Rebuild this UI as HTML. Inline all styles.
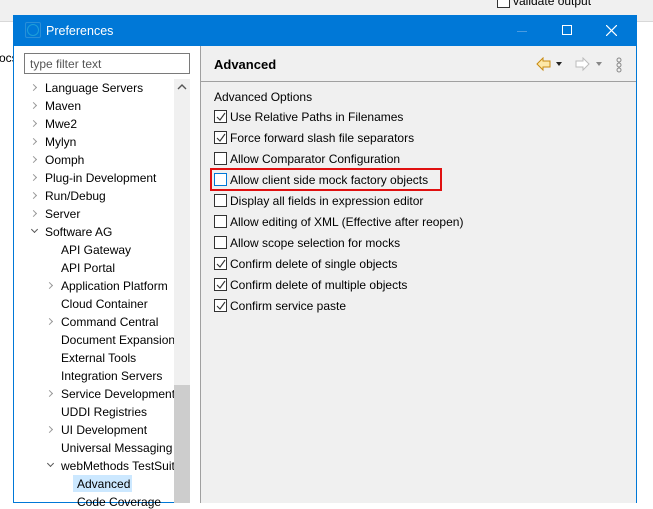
<!DOCTYPE html>
<html><head><style>
*{margin:0;padding:0;box-sizing:border-box}
body{width:653px;height:503px;overflow:hidden;background:#fff;position:relative;font-family:"Liberation Sans",sans-serif;font-size:12px;color:#000}
.a{position:absolute}
.t{position:absolute;white-space:nowrap;line-height:14px}
.cb{position:absolute;width:13px;height:13px;border:1px solid #333;background:#fff}
.cb svg{position:absolute;left:1px;top:1px}
.arr{position:absolute;width:5px;height:5px;border-right:1.3px solid #999;border-bottom:1.3px solid #999;transform:rotate(-45deg)}
.dn{transform:rotate(45deg);border-color:#555}
</style></head><body>
<div class="a" style="left:0;top:0;width:653px;height:22px;background:#f0f0f0;border-bottom:1px solid #d8d8d8"></div>
<div class="cb" style="left:497px;top:-5px;border-color:#333"></div>
<div class="t" style="left:513px;top:-6px">validate output</div>
<div class="t" style="left:-1px;top:51px">ocs</div>
<div class="a" style="left:13px;top:15px;width:624px;height:488px;background:#fff;border:1px solid #0078d7;border-top:none"></div>
<div class="a" style="left:13px;top:15px;width:624px;height:31px;background:#0078d7"></div>
<div class="a" style="left:25px;top:22px;width:16px;height:16px;border:1px solid #2a8fd8;border-radius:2px"></div>
<div class="a" style="left:27px;top:24px;width:12px;height:12px;border:1px solid #1e9fd9;border-radius:50%"></div>
<div class="t" style="left:46px;top:24px;color:#fff;font-size:12.5px">Preferences</div>
<div class="a" style="left:517px;top:31px;width:10px;height:1px;background:#4a9be0"></div>
<div class="a" style="left:562px;top:25px;width:10px;height:10px;border:1px solid #fff"></div>
<svg class="a" style="left:606px;top:25px" width="11" height="11"><path d="M0 0L11 11M11 0L0 11" stroke="#fff" stroke-width="1.2"/></svg>
<div class="a" style="left:24px;top:53px;width:166px;height:21px;border:1px solid #7a7a7a;background:#fff"></div>
<div class="t" style="left:30px;top:57px;color:#555">type filter text</div>
<div class="a" style="left:73px;top:475px;width:59px;height:17px;background:#cce8ff"></div>
<div id="tree"></div>
<div class="a" style="left:174px;top:79px;width:16px;height:424px;background:#f0f0f0"></div>
<div class="a" style="left:174px;top:385px;width:16px;height:118px;background:#cdcdcd"></div>
<svg class="a" style="left:177px;top:84px" width="10" height="6"><path d="M1 5L5 1L9 5" stroke="#555" stroke-width="1.4" fill="none"/></svg>
<div class="a" style="left:190px;top:79px;width:10px;height:424px;background:#fff"></div>
<div class="a" style="left:200px;top:46px;width:1px;height:457px;background:#a0a0a0"></div>
<div class="a" style="left:201px;top:46px;width:435px;height:457px;background:#f0f0f0"></div>
<div class="a" style="left:201px;top:81px;width:435px;height:1px;background:#a0a0a0"></div>
<div class="t" style="left:214px;top:58px;font-weight:bold;font-size:13px">Advanced</div>
<svg class="a" style="left:536px;top:57px" width="90" height="16">
<path d="M1 7L7 1V4H14V10H7V13Z" fill="#fde8a8" stroke="#c88a10" stroke-width="1"/>
<path d="M20 5H26L23 9Z" fill="#222"/>
<path d="M53 7L47 1V4H40V10H47V13Z" fill="#fff" stroke="#bbb" stroke-width="1"/>
<path d="M60 5H66L63 9Z" fill="#888"/>
<circle cx="83" cy="3" r="2" fill="none" stroke="#888"/><circle cx="83" cy="8" r="2" fill="none" stroke="#888"/><circle cx="83" cy="13" r="2" fill="none" stroke="#888"/>
</svg>
<div class="t" style="left:214px;top:90px">Advanced Options</div>
<div id="opts"></div>
<div class="a" style="left:210px;top:168px;width:232px;height:23px;border:2px solid #e01010"></div>
<script>
var tr=[[1,1,"Language Servers"],[1,1,"Maven"],[1,1,"Mwe2"],[1,1,"Mylyn"],[1,1,"Oomph"],[1,1,"Plug-in Development"],[1,1,"Run/Debug"],[1,1,"Server"],[1,2,"Software AG"],[2,0,"API Gateway"],[2,0,"API Portal"],[2,1,"Application Platform"],[2,0,"Cloud Container"],[2,1,"Command Central"],[2,0,"Document Expansion"],[2,0,"External Tools"],[2,0,"Integration Servers"],[2,1,"Service Development"],[2,0,"UDDI Registries"],[2,1,"UI Development"],[2,0,"Universal Messaging"],[2,2,"webMethods TestSuit"],[3,0,"Advanced"],[3,0,"Code Coverage"]];
var h="";tr.forEach(function(r,i){var y=88+i*18;var x=r[0]==1?45:r[0]==2?61:77;
if(r[1]==1)h+='<div class="arr" style="left:'+(x-14)+'px;top:'+(y-3)+'px"></div>';
if(r[1]==2)h+='<div class="arr dn" style="left:'+(x-13)+'px;top:'+(y-5)+'px"></div>';
h+='<div class="t" style="left:'+x+'px;top:'+(y-7)+'px">'+r[2]+'</div>';});
document.getElementById("tree").innerHTML=h;
var o=[[1,"Use Relative Paths in Filenames"],[1,"Force forward slash file separators"],[0,"Allow Comparator Configuration"],[0,"Allow client side mock factory objects"],[0,"Display all fields in expression editor"],[0,"Allow editing of XML (Effective after reopen)"],[0,"Allow scope selection for mocks"],[1,"Confirm delete of single objects"],[1,"Confirm delete of multiple objects"],[1,"Confirm service paste"]];
h="";o.forEach(function(r,i){var y=116+i*21;
h+='<div class="cb" style="left:214px;top:'+(y-6)+'px;'+(i==3?'border-color:#0078d7':'')+'">'+(r[0]?'<svg width="10" height="10"><path d="M1 5L4 8L9 1" stroke="#333" stroke-width="1.1" fill="none"/></svg>':'')+'</div>';
h+='<div class="t" style="left:230px;top:'+(y-6)+'px">'+r[1]+'</div>';});
document.getElementById("opts").innerHTML=h;
</script>
</body></html>
